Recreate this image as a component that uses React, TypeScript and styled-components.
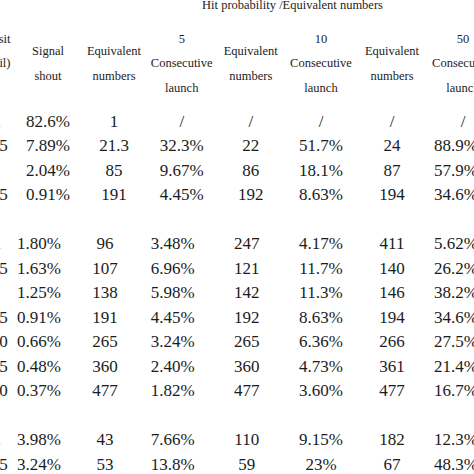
import styled, { createGlobalStyle } from 'styled-components';

const GlobalStyle = createGlobalStyle`
  html, body {
    margin: 0;
    padding: 0;
    background: #ffffff;
    overflow: hidden;
  }
`;

const Page = styled.div`
  width: 474px;
  height: 474px;
  overflow: hidden;
  background: #ffffff;
  color: #1c1c1c;
  font-family: "Liberation Serif", "Times New Roman", serif;
`;

const Table = styled.table`
  border-collapse: collapse;
  table-layout: fixed;
  width: 591px;
  margin: -7px 0 0 -21.5px;
`;

const HeadCell = styled.th<{ $tall?: boolean }>`
  font-weight: normal;
  font-size: 12.5px;
  line-height: 24.5px;
  text-align: center;
  vertical-align: middle;
  padding: 0;
  height: ${p => (p.$tall ? '92px' : '24px')};
  white-space: nowrap;
`;

// the depth label is wider than its column; let it run out to the left
const DepthLabel = styled.div`
  margin-left: -40px;
  padding-right: 5px;
  text-align: right;
`;

const Row = styled.tr`
  height: 24.5px;
`;

const Cell = styled.td<{ $offset: number }>`
  font-size: 17px;
  line-height: 24.5px;
  text-align: center;
  vertical-align: middle;
  padding: 0 ${p => p.$offset * 2}px 0 0;
  white-space: nowrap;
`;

const widths = [37, 65, 67, 68.5, 69.5, 71, 71, 71, 71];

const groups: { offsets: number[]; rows: string[][] }[] = [
  {
    offsets: [0, 0, 0, 0, 0, 0, 0, 7, 0],
    rows: [
      ['1', '82.6%', '1', '/', '/', '/', '/', '/', '/'],
      ['1.5', '7.89%', '21.3', '32.3%', '22', '51.7%', '24', '88.9%', '25'],
      ['2', '2.04%', '85', '9.67%', '86', '18.1%', '87', '57.9%', '88'],
      ['2.5', '0.91%', '191', '4.45%', '192', '8.63%', '194', '34.6%', '196'],
    ],
  },
  {
    offsets: [0, 9, 9, 9, 4, 0, 0, 7, 0],
    rows: [
      ['1', '1.80%', '96', '3.48%', '247', '4.17%', '411', '5.62%', '413'],
      ['1.5', '1.63%', '107', '6.96%', '121', '11.7%', '140', '26.2%', '142'],
      ['2', '1.25%', '138', '5.98%', '142', '11.3%', '146', '38.2%', '150'],
      ['2.5', '0.91%', '191', '4.45%', '192', '8.63%', '194', '34.6%', '196'],
      ['3.0', '0.66%', '265', '3.24%', '265', '6.36%', '266', '27.5%', '268'],
      ['3.5', '0.48%', '360', '2.40%', '360', '4.73%', '361', '21.4%', '363'],
      ['4.0', '0.37%', '477', '1.82%', '477', '3.60%', '477', '16.7%', '479'],
    ],
  },
  {
    offsets: [0, 9, 9, 9, 4, 0, 0, 7, 0],
    rows: [
      ['1', '3.98%', '43', '7.66%', '110', '9.15%', '182', '12.3%', '240'],
      ['1.5', '3.24%', '53', '13.8%', '59', '23%', '67', '48.3%', '74'],
    ],
  },
];

const heads = [
  ['Signal', 'shout'],
  ['Equivalent', 'numbers'],
  ['5', 'Consecutive', 'launch'],
  ['Equivalent', 'numbers'],
  ['10', 'Consecutive', 'launch'],
  ['Equivalent', 'numbers'],
  ['50', 'Consecutive', 'launch'],
  ['Equivalent', 'numbers'],
];

function Lines({ lines }: { lines: string[] }) {
  return (
    <>
      {lines.map((line, i) => (
        <div key={i}>{line}</div>
      ))}
    </>
  );
}

// single-digit depth values sit a little further left in the source table
const firstColOffset = (v: string) => (v.length === 1 && v !== '1' ? 3 : 0);

export default function App() {
  return (
    <Page>
      <GlobalStyle />
      <Table>
        <colgroup>
          {widths.map((w, i) => (
            <col key={i} style={{ width: w }} />
          ))}
        </colgroup>
        <thead>
          <tr>
            <HeadCell rowSpan={2}>
              <DepthLabel>
                <Lines lines={['Deposit', '(mil)']} />
              </DepthLabel>
            </HeadCell>
            <HeadCell colSpan={8}>Hit probability /Equivalent numbers</HeadCell>
          </tr>
          <tr>
            {heads.map((h, i) => (
              <HeadCell key={i} $tall>
                <Lines lines={h} />
              </HeadCell>
            ))}
          </tr>
        </thead>
        <tbody>
          {groups.map((g, gi) => (
            <>
              {gi > 0 && (
                <Row key={`gap-${gi}`}>
                  <Cell $offset={0} colSpan={9} />
                </Row>
              )}
              {g.rows.map((r, ri) => (
                <Row key={`${gi}-${ri}`}>
                  {r.map((v, ci) => (
                    <Cell
                      key={ci}
                      $offset={ci === 0 ? firstColOffset(v) : v === '/' ? 0 : g.offsets[ci]}
                    >
                      {v}
                    </Cell>
                  ))}
                </Row>
              ))}
            </>
          ))}
        </tbody>
      </Table>
    </Page>
  );
}
